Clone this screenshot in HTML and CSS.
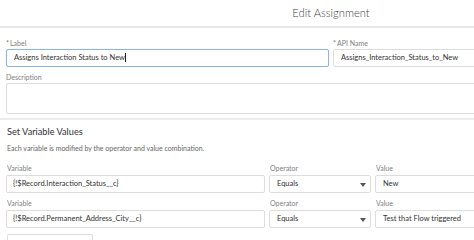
FILE: index.html
```html
<!DOCTYPE html>
<html lang="en">
<head>
	<meta charset="UTF-8">
	<title>Edit Assignment</title>
	<link rel="stylesheet" href="styles.css">
</head>
<body>
	<div class="modal">
		<div class="modal-header">Edit Assignment</div>

		<div class="details">
			<div class="row">
				<div class="field label-field">
					<label><abbr>*</abbr>Label</label>
					<div class="input focus">Assigns Interaction Status to New<span class="caret"></span></div>
				</div>
				<div class="field api-field">
					<label><abbr>*</abbr>API Name</label>
					<div class="input">Assigns_Interaction_Status_to_New</div>
				</div>
			</div>
			<div class="field">
				<label>Description</label>
				<div class="textarea"></div>
			</div>
		</div>

		<div class="variables">
			<h2>Set Variable Values</h2>
			<p class="help">Each variable is modified by the operator and value combination.</p>

			<div class="assign-row">
				<div class="field var-field">
					<label>Variable</label>
					<div class="input">{!$Record.Interaction_Status__c}</div>
				</div>
				<div class="field op-field">
					<label>Operator</label>
					<div class="input select">Equals<span class="arrow"></span></div>
				</div>
				<div class="field val-field">
					<label>Value</label>
					<div class="input">New</div>
				</div>
			</div>

			<div class="assign-row">
				<div class="field var-field">
					<label>Variable</label>
					<div class="input">{!$Record.Permanent_Address_City__c}</div>
				</div>
				<div class="field op-field">
					<label>Operator</label>
					<div class="input select">Equals<span class="arrow"></span></div>
				</div>
				<div class="field val-field">
					<label>Value</label>
					<div class="input">Test that Flow triggered</div>
				</div>
			</div>

			<div class="add-btn"></div>
		</div>
	</div>
</body>
</html>
```

FILE: styles.css
```css
* { margin: 0; padding: 0; box-sizing: border-box; }
html, body { height: 100%; }
body { background: #fff; overflow: hidden; font-family: Lato, "Open Sans", sans-serif; color: #333; }

.modal { width: 640px; }
.modal-header { height: 28px; padding-left: 22px; text-align: center; font-size: 11.2px; font-weight: 300; line-height: 26px; color: #444; border-bottom: 2px solid #e8e8e8; }

.field label { display: block; font-size: 7px; line-height: 8px; color: #808080; }
.field label abbr { color: #777; margin-right: 1px; text-decoration: none; }

.input { height: 18px; border: 1px solid #dddddd; border-radius: 2px; font-size: 7.5px; line-height: 16px; padding-left: 7px; white-space: nowrap; overflow: hidden; position: relative; color: #333; }
.input.focus { border-color: #8fb4de; box-shadow: 0 0 1px #b8d2ef; }
.caret { display: inline-block; width: 1px; height: 9px; background: #222; vertical-align: -2px; }

.details { padding: 11px 6px 4px; border-bottom: 2px solid #ededed; }
.details .row { display: flex; gap: 4px; margin-bottom: 6px; }
.label-field { width: 323px; }
.api-field { flex: 1; }
.details .field label { margin-bottom: 2px; }
.textarea { height: 31px; border: 1px solid #dddddd; border-radius: 2px; }

.variables { padding: 6px 6px 0; }
.variables h2 { font-size: 9.2px; font-weight: normal; line-height: 12px; color: #333; padding-left: 1px; }
.help { font-size: 7px; line-height: 8px; color: #666; margin: 6px 0 0 1px; }

.assign-row { display: flex; gap: 4px; margin-top: 12px; }
.assign-row + .assign-row { margin-top: 6px; }
.assign-row .field label { margin-bottom: 3px; padding-left: 1px; }
.var-field { width: 259px; }
.op-field { width: 102px; }
.val-field { flex: 1; }
.var-field .input { padding-left: 6px; }
.select .arrow { position: absolute; right: 4px; top: 7px; border-left: 3px solid transparent; border-right: 3px solid transparent; border-top: 4px solid #555; }

.add-btn { width: 86px; height: 12px; margin: 6px 0 0 1px; border: 1px solid #dddddd; border-bottom: 0; border-radius: 2px 2px 0 0; }
```
